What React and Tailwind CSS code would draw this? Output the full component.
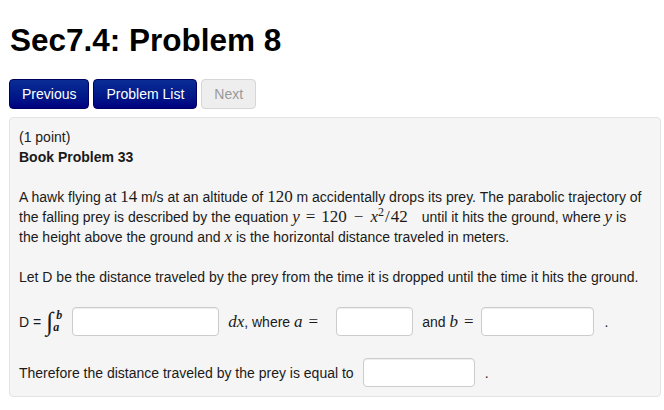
const SANS = { fontFamily: '"Liberation Sans", Arial, sans-serif' };

function M({ children, className = '' }) {
  return (
    <span className={`font-['Liberation_Serif',serif] text-[17px] ${className}`}>{children}</span>
  );
}

function I({ children }) {
  return <span className="italic">{children}</span>;
}

function Rel({ children }) {
  return <span className="px-[6px]">{children}</span>;
}

function Box({ w }) {
  return (
    <input
      type="text"
      className={`h-[29px] ${w} rounded-[4px] border border-[#cccccc] bg-white px-[6px] shadow-[inset_0_1px_1px_rgba(0,0,0,0.075)] outline-none`}
    />
  );
}

function NavButton({ children, disabled }) {
  if (disabled) {
    return (
      <button
        disabled
        className="h-[30px] px-[12px] rounded-[4px] border border-[#d6d6d6] bg-[#eeeeee] text-[14px] text-[#9a9a9a]"
      >
        {children}
      </button>
    );
  }
  return (
    <button className="h-[30px] px-[12px] rounded-[4px] border border-[#00005e] bg-gradient-to-b from-[#0c2c95] to-[#000080] text-[14px] text-white">
      {children}
    </button>
  );
}

export default function App() {
  return (
    <div className="min-h-screen bg-white pl-[9px] pr-[3px] pt-[20px] text-[#1a1a1a]" style={SANS}>
      <h1 className="text-[31.5px] leading-[40px] font-bold text-black pl-[1px]">Sec7.4: Problem 8</h1>

      <div className="mt-[19px] flex gap-[4px]">
        <NavButton>Previous</NavButton>
        <NavButton>Problem List</NavButton>
        <NavButton disabled>Next</NavButton>
      </div>

      <div className="mt-[8px] rounded-[4px] border border-[#e3e3e3] bg-[#f5f5f5] p-[9px] text-[14px] leading-[20px]">
        <div>(1 point)</div>
        <div className="font-bold">Book Problem 33</div>

        <p className="mt-[20px] whitespace-nowrap">
          A hawk flying at <M>14</M> m/s at an altitude of <M>120</M> m accidentally drops its prey. The parabolic trajectory of
          <br />
          the falling prey is described by the equation{' '}
          <M>
            <I>y</I>
            <Rel>=</Rel>120<span className="px-[7px]">−</span>
            <I>x</I>
            <sup className="text-[12px]">2</sup>
            <span className="px-[1px]">/</span>42
          </M>
          <span className="pl-[14px]">until it hits the ground, where </span>
          <M>
            <I>y</I>
          </M>{' '}
          is
          <br />
          the height above the ground and{' '}
          <M>
            <I>x</I>
          </M>{' '}
          is the horizontal distance traveled in meters.
        </p>

        <p className="mt-[20px]">
          Let D be the distance traveled by the prey from the time it is dropped until the time it hits the ground.
        </p>

        <div className="mt-[20px] flex items-center h-[29px] whitespace-pre">
          <span>D =</span>
          <span className="ml-[5px] inline-flex items-center w-[21px] font-['Liberation_Serif',serif] italic">
            <span className="text-[26px] leading-none">∫</span>
            <span className="flex flex-col text-[12px] font-bold leading-[12px] -mt-[2px]">
              <span className="pl-[3px]">b</span>
              <span>a</span>
            </span>
          </span>
          <span className="ml-[5px]">
            <Box w="w-[147px]" />
          </span>
          <M className="ml-[9px]">
            <I>dx</I>
          </M>
          <span>, where </span>
          <M>
            <I>a</I>
            <Rel>=</Rel>
          </M>
          <span className="ml-[12px]">
            <Box w="w-[77px]" />
          </span>
          <span className="ml-[9px]">and </span>
          <M>
            <I>b</I>
            <Rel>=</Rel>
          </M>
          <span className="ml-[2px]">
            <Box w="w-[113px]" />
          </span>
          <span className="ml-[10px]">.</span>
        </div>

        <div className="mt-[22px] flex items-center h-[29px]">
          <span>Therefore the distance traveled by the prey is equal to</span>
          <span className="ml-[9px]">
            <Box w="w-[112px]" />
          </span>
          <span className="ml-[10px]">.</span>
        </div>
      </div>
    </div>
  );
}
